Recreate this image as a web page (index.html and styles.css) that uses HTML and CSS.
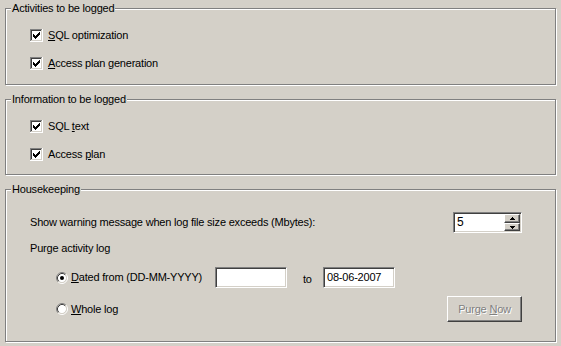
FILE: index.html
```html
<!DOCTYPE html>
<html>
<head>
<meta charset="utf-8">
<link rel="stylesheet" href="styles.css">
</head>
<body>
<div class="dialog">
  <div class="group g1">
    <div class="legend">Activities to be logged</div>
    <div class="rows">
      <div class="check">
        <svg class="cb" width="13" height="13" viewBox="0 0 13 13" shape-rendering="crispEdges"><path d="M0 0h12v1H1v11H0z" fill="#808080"/><path d="M1 1h10v1H2v9H1z" fill="#404040"/><path d="M11 1h1v11H1v-1h10z" fill="#d4d0c8"/><path d="M12 0h1v13H0v-1h12z" fill="#fff"/><rect x="2" y="2" width="9" height="9" fill="#fff"/><path d="M9 3h1v1H9zM8 4h2v1H8zM3 5h1v1H3zM7 5h3v1H7zM3 6h2v1H3zM6 6h3v1H6zM3 7h5v1H3zM4 8h3v1H4zM5 9h1v1H5z" fill="#000"/></svg>
        <span><u>S</u>QL optimization</span>
      </div>
      <div class="check">
        <svg class="cb" width="13" height="13" viewBox="0 0 13 13" shape-rendering="crispEdges"><path d="M0 0h12v1H1v11H0z" fill="#808080"/><path d="M1 1h10v1H2v9H1z" fill="#404040"/><path d="M11 1h1v11H1v-1h10z" fill="#d4d0c8"/><path d="M12 0h1v13H0v-1h12z" fill="#fff"/><rect x="2" y="2" width="9" height="9" fill="#fff"/><path d="M9 3h1v1H9zM8 4h2v1H8zM3 5h1v1H3zM7 5h3v1H7zM3 6h2v1H3zM6 6h3v1H6zM3 7h5v1H3zM4 8h3v1H4zM5 9h1v1H5z" fill="#000"/></svg>
        <span><u>A</u>ccess plan generation</span>
      </div>
    </div>
  </div>

  <div class="group g2">
    <div class="legend">Information to be logged</div>
    <div class="rows">
      <div class="check">
        <svg class="cb" width="13" height="13" viewBox="0 0 13 13" shape-rendering="crispEdges"><path d="M0 0h12v1H1v11H0z" fill="#808080"/><path d="M1 1h10v1H2v9H1z" fill="#404040"/><path d="M11 1h1v11H1v-1h10z" fill="#d4d0c8"/><path d="M12 0h1v13H0v-1h12z" fill="#fff"/><rect x="2" y="2" width="9" height="9" fill="#fff"/><path d="M9 3h1v1H9zM8 4h2v1H8zM3 5h1v1H3zM7 5h3v1H7zM3 6h2v1H3zM6 6h3v1H6zM3 7h5v1H3zM4 8h3v1H4zM5 9h1v1H5z" fill="#000"/></svg>
        <span>SQL <u>t</u>ext</span>
      </div>
      <div class="check">
        <svg class="cb" width="13" height="13" viewBox="0 0 13 13" shape-rendering="crispEdges"><path d="M0 0h12v1H1v11H0z" fill="#808080"/><path d="M1 1h10v1H2v9H1z" fill="#404040"/><path d="M11 1h1v11H1v-1h10z" fill="#d4d0c8"/><path d="M12 0h1v13H0v-1h12z" fill="#fff"/><rect x="2" y="2" width="9" height="9" fill="#fff"/><path d="M9 3h1v1H9zM8 4h2v1H8zM3 5h1v1H3zM7 5h3v1H7zM3 6h2v1H3zM6 6h3v1H6zM3 7h5v1H3zM4 8h3v1H4zM5 9h1v1H5z" fill="#000"/></svg>
        <span>Access <u>p</u>lan</span>
      </div>
    </div>
  </div>

  <div class="group g3">
    <div class="legend">Housekeeping</div>
    <div class="row-warn">
      <span>Show warning message when log file size exceeds (Mbytes):</span>
      <div class="spin">
        <span class="spin-val">5</span>
        <div class="spin-btns">
          <div class="spin-btn up"><svg width="5" height="3" viewBox="0 0 5 3" shape-rendering="crispEdges"><path d="M2 0h1v1h1v1h1v1H0V2h1V1h1z" fill="#000"/></svg></div>
          <div class="spin-btn down"><svg width="5" height="3" viewBox="0 0 5 3" shape-rendering="crispEdges"><path d="M0 0h5v1H4v1H3v1H2V2H1V1H0z" fill="#000"/></svg></div>
        </div>
      </div>
    </div>
    <div class="row-purge">Purge activity log</div>
    <div class="row-dated">
      <div class="radio-label">
        <svg class="rb" width="12" height="12" viewBox="0 0 12 12"><circle cx="6" cy="6" r="4.2" fill="#fff"/><path d="M2.11 9.89A5.5 5.5 0 0 1 9.89 2.11" fill="none" stroke="#808080"/><path d="M9.89 2.11A5.5 5.5 0 0 1 2.11 9.89" fill="none" stroke="#fff"/><path d="M2.82 9.18A4.5 4.5 0 0 1 9.18 2.82" fill="none" stroke="#404040"/><path d="M9.18 2.82A4.5 4.5 0 0 1 2.82 9.18" fill="none" stroke="#d4d0c8"/><circle cx="6" cy="6" r="2" fill="#000"/></svg>
        <span><u>D</u>ated from (DD-MM-YYYY)</span>
      </div>
      <div class="field"></div>
      <span class="to">to</span>
      <div class="field">08-06-2007</div>
    </div>
    <div class="row-whole">
      <div class="radio-label">
        <svg class="rb" width="12" height="12" viewBox="0 0 12 12"><circle cx="6" cy="6" r="4.2" fill="#fff"/><path d="M2.11 9.89A5.5 5.5 0 0 1 9.89 2.11" fill="none" stroke="#808080"/><path d="M9.89 2.11A5.5 5.5 0 0 1 2.11 9.89" fill="none" stroke="#fff"/><path d="M2.82 9.18A4.5 4.5 0 0 1 9.18 2.82" fill="none" stroke="#404040"/><path d="M9.18 2.82A4.5 4.5 0 0 1 2.82 9.18" fill="none" stroke="#d4d0c8"/></svg>
        <span><u>W</u>hole log</span>
      </div>
      <div class="button disabled"><span>Purge <u>N</u>ow</span></div>
    </div>
  </div>
</div>
</body>
</html>
```

FILE: styles.css
```css
html, body {
  margin: 0;
  padding: 0;
}
body {
  background: #d4d0c8;
  font-family: "Liberation Sans", Arial, sans-serif;
  font-size: 11px;
  letter-spacing: -0.2px;
  color: #000;
  width: 561px;
  height: 346px;
  overflow: hidden;
}
.dialog {
  padding: 8px 0 0 5px;
  display: flex;
  flex-direction: column;
  gap: 14px;
}
.group {
  box-sizing: border-box;
  width: 551px;
  border: 1px solid #808080;
  box-shadow: inset 1px 1px #fff, 1px 1px #fff;
  padding: 0 33px 0 24px;
}
.g1 { height: 77px; }
.g2 { height: 76px; }
.g3 { height: 153px; }
.legend {
  display: table;
  margin: -7px 0 0 -19px;
  padding: 0 1px;
  background: #d4d0c8;
  line-height: 13px;
}
.rows {
  display: flex;
  flex-direction: column;
  gap: 12px;
  margin-top: 12px;
}
.check {
  display: flex;
  align-items: center;
  gap: 5px;
  height: 16px;
  line-height: 13px;
}
.cb, .rb { display: block; flex: none; }

.row-warn {
  margin-top: 16px;
  height: 21px;
  display: flex;
  align-items: center;
  justify-content: space-between;
  line-height: 13px;
}
.spin {
  box-sizing: border-box;
  width: 69px;
  height: 21px;
  background: #fff;
  border: 1px solid;
  border-color: #808080 #fff #fff #808080;
  box-shadow: inset 1px 1px #404040, inset -1px -1px #d4d0c8;
  padding: 1px;
  display: flex;
}
.spin-val {
  flex: 1;
  padding-left: 2px;
  line-height: 17px;
  font-size: 12px;
}
.spin-btns {
  width: 16px;
  display: flex;
  flex-direction: column;
}
.spin-btn {
  box-sizing: border-box;
  background: #d4d0c8;
  border: 1px solid;
  border-color: #fff #404040 #404040 #fff;
  box-shadow: inset -1px -1px #808080;
  display: flex;
  align-items: center;
  justify-content: center;
}
.spin-btn svg { display: block; }
.spin-btn.up { height: 9px; }
.spin-btn.down { height: 8px; }

.row-purge {
  margin-top: 9px;
  line-height: 13px;
}
.row-dated {
  margin-top: 12px;
  height: 21px;
  display: flex;
  align-items: center;
}
.radio-label {
  display: flex;
  align-items: center;
  gap: 3px;
  margin-left: 26px;
  line-height: 13px;
}
.row-dated .radio-label { width: 159px; }
.field {
  box-sizing: border-box;
  width: 72px;
  height: 21px;
  background: #fff;
  border: 1px solid;
  border-color: #808080 #fff #fff #808080;
  box-shadow: inset 1px 1px #404040, inset -1px -1px #d4d0c8;
  padding: 1px 3px;
  line-height: 17px;
}
.to {
  width: 36px;
  box-sizing: border-box;
  padding-left: 16px;
  padding-top: 2px;
}
.row-whole {
  margin-top: 8px;
  height: 26px;
  display: flex;
  align-items: center;
  justify-content: space-between;
}
.button {
  box-sizing: border-box;
  width: 75px;
  height: 26px;
  border: 1px solid;
  border-color: #fff #404040 #404040 #fff;
  box-shadow: inset -1px -1px #808080;
  display: flex;
  align-items: center;
  justify-content: center;
}
.button.disabled {
  color: #808080;
  text-shadow: 1px 1px 0 #fff;
}
```
